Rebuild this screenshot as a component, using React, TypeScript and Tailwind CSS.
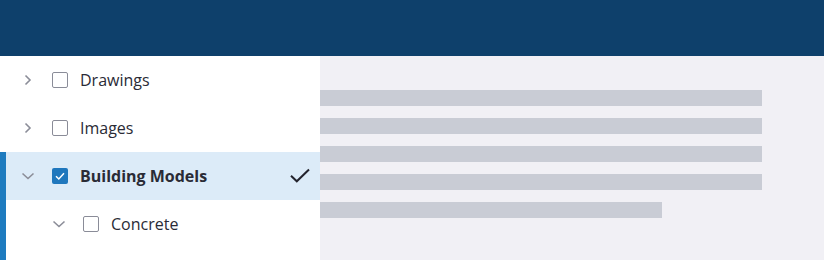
import React from 'react';

const font = { fontFamily: '"Open Sans", "Noto Sans", sans-serif' };

function Chevron({ open }: { open: boolean }) {
  return (
    <svg width="16" height="16" viewBox="0 0 16 16" className="shrink-0">
      {open ? (
        <path d="M2.5 5.5 L8 10.5 L13.5 5.5" fill="none" stroke="#8b8d98" strokeWidth="1.6" />
      ) : (
        <path d="M5.5 3.5 L10 8 L5.5 12.5" fill="none" stroke="#8b8d98" strokeWidth="1.6" />
      )}
    </svg>
  );
}

function Checkbox({ checked }: { checked: boolean }) {
  if (checked) {
    return (
      <div className="w-4 h-4 shrink-0 rounded-[2px] bg-[#1f77bd] flex items-center justify-center">
        <svg width="12" height="12" viewBox="0 0 12 12">
          <path d="M2 6.2 L4.8 9 L10 3.2" fill="none" stroke="#ffffff" strokeWidth="1.5" />
        </svg>
      </div>
    );
  }
  return <div className="w-4 h-4 shrink-0 rounded-[2px] border-[1.5px] border-[#8a8c98] bg-white" />;
}

interface Row {
  label: string;
  open: boolean;
  checked: boolean;
  indent: number;
}

function TreeRow({ row, selected }: { row: Row; selected?: boolean }) {
  return (
    <div
      className={`h-12 flex items-center pr-[10px] ${selected ? 'bg-[#dcebf8]' : ''}`}
      style={{ paddingLeft: 14 + row.indent * 31 }}
    >
      <Chevron open={row.open} />
      <div className="ml-4">
        <Checkbox checked={row.checked} />
      </div>
      <span
        className={`ml-3 text-[16px] text-[#2a2b36] flex-1 ${selected ? 'font-bold' : ''}`}
      >
        {row.label}
      </span>
      {selected && (
        <svg width="20" height="20" viewBox="0 0 20 20">
          <path d="M1 9.8 L6.8 15.3 L19 3.5" fill="none" stroke="#23232d" strokeWidth="2" />
        </svg>
      )}
    </div>
  );
}

export default function App() {
  const bars = [442, 442, 442, 442, 342];
  return (
    <div className="w-[824px] h-[260px] flex flex-col overflow-hidden" style={font}>
      <div className="h-14 bg-[#0e406b] shrink-0" />
      <div className="flex flex-1 min-h-0">
        <div className="w-[320px] bg-white shrink-0">
          <div className="pl-[6px]">
            <TreeRow row={{ label: 'Drawings', open: false, checked: false, indent: 0 }} />
            <TreeRow row={{ label: 'Images', open: false, checked: false, indent: 0 }} />
          </div>
          <div className="border-l-[6px] border-[#1e7bbf] h-full">
            <TreeRow selected row={{ label: 'Building Models', open: true, checked: true, indent: 0 }} />
            <TreeRow row={{ label: 'Concrete', open: true, checked: false, indent: 1 }} />
          </div>
        </div>
        <div className="flex-1 bg-[#f1f0f5] pt-[34px] flex flex-col gap-3">
          {bars.map((w, i) => (
            <div key={i} className="h-4 bg-[#c9ccd5]" style={{ width: w }} />
          ))}
        </div>
      </div>
    </div>
  );
}
